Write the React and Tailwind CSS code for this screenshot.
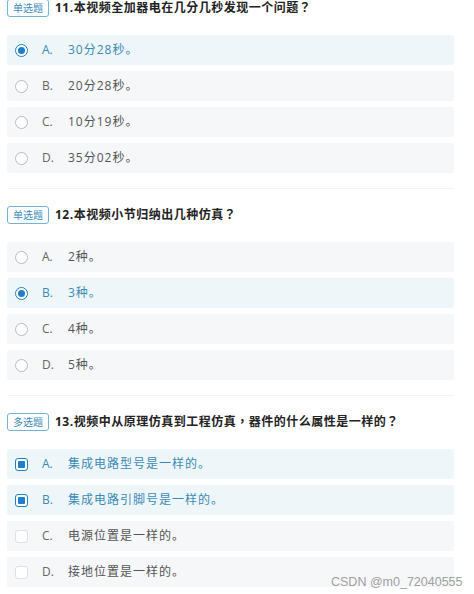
import React from "react";

const questions = [
  {
    type: "单选题",
    multi: false,
    title: "11.本视频全加器电在几分几秒发现一个问题？",
    options: [
      { k: "A.", t: "30分28秒。", sel: true },
      { k: "B.", t: "20分28秒。", sel: false },
      { k: "C.", t: "10分19秒。", sel: false },
      { k: "D.", t: "35分02秒。", sel: false },
    ],
  },
  {
    type: "单选题",
    multi: false,
    title: "12.本视频小节归纳出几种仿真？",
    options: [
      { k: "A.", t: "2种。", sel: false },
      { k: "B.", t: "3种。", sel: true },
      { k: "C.", t: "4种。", sel: false },
      { k: "D.", t: "5种。", sel: false },
    ],
  },
  {
    type: "多选题",
    multi: true,
    title: "13.视频中从原理仿真到工程仿真，器件的什么属性是一样的？",
    options: [
      { k: "A.", t: "集成电路型号是一样的。", sel: true },
      { k: "B.", t: "集成电路引脚号是一样的。", sel: true },
      { k: "C.", t: "电源位置是一样的。", sel: false },
      { k: "D.", t: "接地位置是一样的。", sel: false },
    ],
  },
];

function Mark({ multi, sel }) {
  if (multi) {
    return sel ? (
      <span className="flex h-[13px] w-[13px] items-center justify-center rounded-[3px] border border-[#1f7fc8] bg-white">
        <span className="h-[7px] w-[7px] rounded-[1px] bg-[#1f7fc8]" />
      </span>
    ) : (
      <span className="h-[13px] w-[13px] rounded-[3px] border border-[#dcdfe3] bg-white" />
    );
  }
  return sel ? (
    <span className="flex h-[13px] w-[13px] items-center justify-center rounded-full border border-[#1f7fc8] bg-white">
      <span className="h-[7px] w-[7px] rounded-full bg-[#1f7fc8]" />
    </span>
  ) : (
    <span className="h-[13px] w-[13px] rounded-full border border-[#b9bdc2] bg-white" />
  );
}

function Question({ q, last }) {
  return (
    <div>
      <div className="flex h-[18px] items-center gap-[6px]">
        <span className="flex h-[18px] w-[42px] items-center justify-center rounded-[3px] border border-[#74b3d2] text-[10px] text-[#3d8bb8]">
          {q.type}
        </span>
        <span
          className="text-[12px] font-bold tracking-[0.5px] text-[#222]"
          style={{ fontFamily: '"Open Sans", "Noto Sans CJK TC", sans-serif' }}
        >
          {q.title}
        </span>
      </div>
      <div className="mt-[18px] flex flex-col gap-[6px]">
        {q.options.map((o) => (
          <div
            key={o.k}
            className={`flex h-[30px] items-center rounded-[2px] pl-[8px] ${
              o.sel ? "bg-[#eef6f9]" : "bg-[#f6f7f9]"
            }`}
          >
            <Mark multi={q.multi} sel={o.sel} />
            <span
              className={`ml-[14px] w-[26px] text-[12px] ${o.sel ? "text-[#3a8ab5]" : "text-[#666]"}`}
            >
              {o.k}
            </span>
            <span
              className={`text-[12px] tracking-[1px] ${o.sel ? "text-[#3a8ab5]" : "text-[#555]"}`}
            >
              {o.t}
            </span>
          </div>
        ))}
      </div>
      {!last && <div className="mt-[15px] mb-[17px] h-px bg-[#f1f2f4]" />}
    </div>
  );
}

export default function App() {
  return (
    <div
      className="relative h-[594px] w-[474px] overflow-hidden bg-white"
      style={{ fontFamily: '"Open Sans", "Noto Sans CJK SC", sans-serif' }}
    >
      <div className="mt-[-1px] w-[447px] pl-[7px] box-content">
        {questions.map((q, i) => (
          <Question key={i} q={q} last={i === questions.length - 1} />
        ))}
      </div>
      <div
        className="absolute left-[331px] top-[573px] text-[12.5px] text-[#a0a0a0]"
        style={{ fontFamily: '"Liberation Sans", sans-serif' }}
      >
        CSDN @m0_72040555
      </div>
    </div>
  );
}
